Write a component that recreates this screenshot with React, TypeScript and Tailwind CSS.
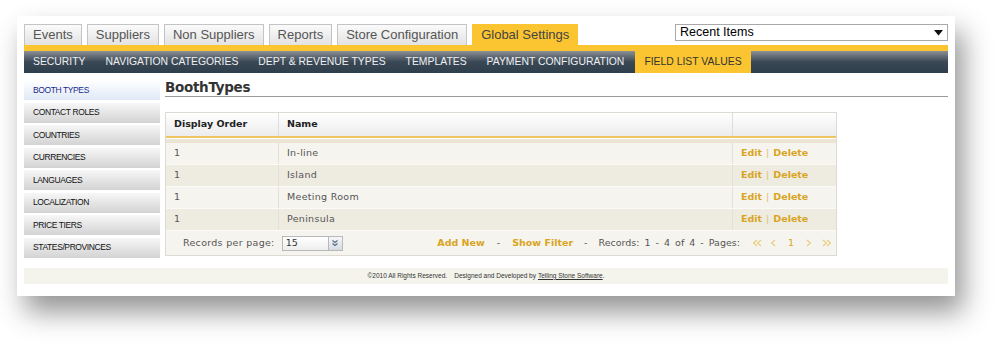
import React from 'react'

const tabs = ['Events', 'Suppliers', 'Non Suppliers', 'Reports', 'Store Configuration']
const navItems = ['SECURITY', 'NAVIGATION CATEGORIES', 'DEPT & REVENUE TYPES', 'TEMPLATES', 'PAYMENT CONFIGURATION']
const sideItems = ['CONTACT ROLES', 'COUNTRIES', 'CURRENCIES', 'LANGUAGES', 'LOCALIZATION', 'PRICE TIERS', 'STATES/PROVINCES']
const rows = ['In-line', 'Island', 'Meeting Room', 'Peninsula']

function DoubleChevron() {
  return (
    <svg width="8" height="8" viewBox="0 0 8 8" fill="none" stroke="#5a6b80" strokeWidth="1.2">
      <path d="M1.5 1.5 L4 3.5 L6.5 1.5" />
      <path d="M1.5 4.5 L4 6.5 L6.5 4.5" />
    </svg>
  )
}

function Arrow({ dir, double }: { dir: 'left' | 'right'; double?: boolean }) {
  const one = dir === 'left' ? 'M5 1 L1.5 4 L5 7' : 'M1 1 L4.5 4 L1 7'
  const two = dir === 'left' ? 'M9 1 L5.5 4 L9 7' : 'M5 1 L8.5 4 L5 7'
  return (
    <svg width={double ? 10 : 6} height="8" viewBox={double ? '0 0 10 8' : '0 0 6 8'} fill="none" stroke="#ebcb7c" strokeWidth="1.1">
      <path d={one} />
      {double && <path d={two} />}
    </svg>
  )
}

export default function App() {
  return (
    <div className="w-[1003px] h-[344px] bg-white overflow-hidden pt-[16px] pl-[17px] font-['Liberation_Sans',Arial,sans-serif]">
      <div className="w-[938px] h-[280px] bg-white shadow-[8px_16px_26px_rgba(0,0,0,0.42)] px-[7px] pt-[8px]">
        {/* top tabs */}
        <div className="flex items-start justify-between h-[21px]">
          <div className="flex gap-[5px]">
            {tabs.map((t) => (
              <div
                key={t}
                className="h-[21px] px-[8px] flex items-center text-[13px] text-[#555] border border-b-0 border-[#c4c4c4] bg-gradient-to-b from-[#fbfbfb] to-[#e2e2e2]"
              >
                {t}
              </div>
            ))}
            <div className="h-[21px] px-[9px] flex items-center text-[13px] text-[#444] bg-[#fbc531]">
              Global Settings
            </div>
          </div>
          <div className="w-[273px] h-[17px] border border-[#a9a9a9] bg-white flex items-center justify-between pl-[4px] pr-[4px] text-[12.5px] text-black">
            <span>Recent Items</span>
            <svg width="9" height="6" viewBox="0 0 9 6">
              <path d="M0 0 H9 L4.5 5.5 Z" fill="#111" />
            </svg>
          </div>
        </div>
        <div className="h-[6px] bg-[#fbc531]" />
        {/* sub nav */}
        <div className="h-[22px] flex gap-[2px] bg-gradient-to-b from-[#8c9096] via-[#3a4855] via-50% to-[#2f3e4b]">
          {navItems.map((n) => (
            <div key={n} className="px-[9px] flex items-center text-[10.4px] text-[#eef0f2]">
              {n}
            </div>
          ))}
          <div className="px-[9px] flex items-center text-[10.4px] text-[#333] bg-[#fbc531]">
            FIELD LIST VALUES
          </div>
        </div>

        <div className="flex gap-[5px] mt-[7px]">
          {/* sidebar */}
          <div className="w-[136px] flex flex-col gap-[2.5px]">
            <div className="h-[20px] flex items-center pl-[9px] text-[8.5px] tracking-[-0.4px] text-[#1a2a8a] bg-gradient-to-b from-white to-[#dfe9f6]">
              BOOTH TYPES
            </div>
            {sideItems.map((s) => (
              <div
                key={s}
                className="h-[20px] flex items-center pl-[9px] text-[8.5px] tracking-[-0.4px] text-[#111] bg-gradient-to-b from-[#f7f7f7] to-[#d3d3d3]"
              >
                {s}
              </div>
            ))}
          </div>

          {/* main */}
          <div className="flex-1">
            <div className="h-[17px] border-b border-[#9a9a9a] text-[13.5px] font-bold text-[#333] font-['DejaVu_Sans',Verdana,sans-serif] leading-[14px] tracking-[-0.3px]">
              BoothTypes
            </div>
            <div className="mt-[15px] w-[672px] border border-[#dcdad2] font-['DejaVu_Sans',Verdana,sans-serif] text-[9.5px] text-[#555]">
              <div className="flex h-[25px] bg-gradient-to-b from-white to-[#ececec] border-b-2 border-[#f0c460] font-bold text-[#222]">
                <div className="w-[113px] pl-[8px] flex items-center border-r border-[#dedede]">Display Order</div>
                <div className="w-[454px] pl-[8px] flex items-center border-r border-[#dedede]">Name</div>
                <div className="flex-1" />
              </div>
              <div className="h-[5px] bg-[#ebe6d3] border-t border-white" />
              {rows.map((r, i) => (
                <div
                  key={r}
                  className={`flex h-[22px] border-b border-[#fbfaf6] ${i % 2 === 0 ? 'bg-[#f6f4ef]' : 'bg-[#eeebe1]'}`}
                >
                  <div className="w-[113px] pl-[8px] flex items-center border-r border-[#e4e0d4]">1</div>
                  <div className="w-[454px] pl-[8px] flex items-center border-r border-[#e4e0d4] tracking-[0.3px]">{r}</div>
                  <div className="flex-1 pl-[8px] flex items-center font-bold text-[#d9a521]">
                    Edit<span className="mx-[4px] font-normal text-[#e0c070]">|</span>Delete
                  </div>
                </div>
              ))}
              <div className="flex items-center h-[24px] bg-[#f6f4ef] pl-[17px] pr-[4px]">
                <span className="tracking-[0.3px]">Records per page:</span>
                <div className="ml-[7px] w-[61px] h-[15px] border border-[#b8b8b8] bg-gradient-to-b from-white to-[#eeeeee] flex items-center justify-between">
                  <span className="pl-[3px] text-[#333]">15</span>
                  <div className="w-[14px] h-full border-l border-[#b8b8b8] bg-gradient-to-b from-[#f5f7fa] to-[#d6dbe2] flex items-center justify-center">
                    <DoubleChevron />
                  </div>
                </div>
                <div className="ml-auto flex items-center">
                  <span className="font-bold text-[#d9a521]">Add New</span>
                  <span className="mx-[12px]">-</span>
                  <span className="font-bold text-[#d9a521]">Show Filter</span>
                  <span className="mx-[11px]">-</span>
                  <span className="[word-spacing:2px]">Records: 1 - 4 of 4 - Pages:</span>
                  <div className="ml-[12px] flex items-center">
                    <Arrow dir="left" double />
                    <span className="ml-[8px]"><Arrow dir="left" /></span>
                    <span className="ml-[12px] text-[#d9a521]">1</span>
                    <span className="ml-[12px]"><Arrow dir="right" /></span>
                    <span className="ml-[10px]"><Arrow dir="right" double /></span>
                  </div>
                </div>
              </div>
            </div>
          </div>
        </div>

        {/* footer */}
        <div className="mt-[10px] h-[16px] bg-[#f4f3ec] flex items-center justify-center text-[6.5px] text-[#333]">
          <span>©2010 All Rights Reserved.&nbsp;&nbsp;&nbsp; Designed and Developed by </span>
          <span className="underline ml-[2px]">Telling Stone Software</span>
          <span>.</span>
        </div>
      </div>
    </div>
  )
}
